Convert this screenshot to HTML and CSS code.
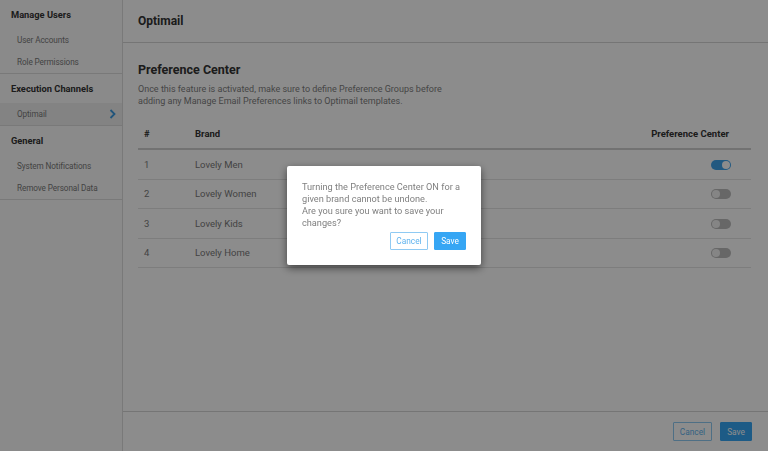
FILE: index.html
```html
<!DOCTYPE html>
<html lang="en">
<head>
  <meta charset="UTF-8" />
  <meta name="viewport" content="width=device-width, initial-scale=1.0"/>
  <title>Optimail Settings</title>
  <link rel="stylesheet" href="styles.css">
</head>
<body>
  <div class="layout">
    <nav class="sidebar">
      <div class="nav-group">
        <div class="nav-title">Manage Users</div>
        <a class="nav-item">User Accounts</a>
        <a class="nav-item">Role Permissions</a>
      </div>
      <div class="nav-group">
        <div class="nav-title">Execution Channels</div>
        <a class="nav-item active">Optimail
          <svg class="chevron" width="7" height="10" viewBox="0 0 7 10"><path d="M1.5 1 L5.5 5 L1.5 9" fill="none" stroke="#3d9be0" stroke-width="1.8"/></svg>
        </a>
      </div>
      <div class="nav-group">
        <div class="nav-title">General</div>
        <a class="nav-item">System Notifications</a>
        <a class="nav-item">Remove Personal Data</a>
      </div>
    </nav>

    <main class="main">
      <header class="page-header">Optimail</header>

      <section class="content">
        <h2>Preference Center</h2>
        <p class="desc">Once this feature is activated, make sure to define Preference Groups before adding any Manage Email Preferences links to Optimail templates.</p>

        <table class="brands">
          <colgroup>
            <col class="col-num">
            <col>
            <col class="col-pref">
          </colgroup>
          <thead>
            <tr><th class="num">#</th><th>Brand</th><th class="right">Preference Center</th></tr>
          </thead>
          <tbody>
            <tr><td class="num">1</td><td>Lovely Men</td><td class="right"><span class="toggle on"></span></td></tr>
            <tr><td class="num">2</td><td>Lovely Women</td><td class="right"><span class="toggle"></span></td></tr>
            <tr><td class="num">3</td><td>Lovely Kids</td><td class="right"><span class="toggle"></span></td></tr>
            <tr><td class="num">4</td><td>Lovely Home</td><td class="right"><span class="toggle"></span></td></tr>
          </tbody>
        </table>
      </section>

      <footer class="page-footer">
        <button class="btn btn-outline">Cancel</button>
        <button class="btn btn-primary">Save</button>
      </footer>
    </main>
  </div>

  <div class="overlay">
    <div class="modal">
      <p>Turning the Preference Center ON for a given brand cannot be undone.<br>Are you sure you want to save your changes?</p>
      <div class="modal-actions">
        <button class="btn btn-outline">Cancel</button>
        <button class="btn btn-primary">Save</button>
      </div>
    </div>
  </div>
</body>
</html>
```

FILE: styles.css
```css
body {
  font-family: Roboto, "Liberation Sans", sans-serif;
  margin: 0;
  background: #fff;
  color: #333;
}
.layout {
  display: flex;
  height: 451px;
}
.sidebar {
  width: 122px;
  flex-shrink: 0;
  background: #fbfbfb;
  border-right: 1px solid #dcdcdc;
}
.nav-group {
  border-bottom: 1px solid #dcdcdc;
}
.nav-title {
  height: 29px;
  line-height: 29px;
  padding-left: 11px;
  font-size: 9.3px;
  font-weight: bold;
  color: #333;
}
.nav-item {
  display: flex;
  align-items: center;
  justify-content: space-between;
  height: 22px;
  padding: 0 6px 0 17px;
  font-size: 8.2px;
  letter-spacing: -0.1px;
  color: #7a7a7a;
}
.nav-item.active {
  background: #efefef;
}
.main {
  flex: 1;
  display: flex;
  flex-direction: column;
  background: #fff;
}
.page-header {
  height: 42px;
  line-height: 42px;
  padding-left: 15px;
  border-bottom: 1px solid #d6d6d6;
  font-size: 12px;
  font-weight: bold;
}
.content {
  flex: 1;
  padding: 19px 17px 0 15px;
}
.content h2 {
  margin: 0;
  font-size: 12.5px;
  line-height: 16px;
}
.desc {
  margin: 6px 0 0;
  width: 310px;
  font-size: 9px;
  line-height: 11.5px;
  color: #808080;
}
.brands {
  width: 100%;
  table-layout: fixed;
  margin-top: 12px;
  border-collapse: collapse;
  font-size: 9.5px;
}
.col-num {
  width: 57px;
}
.col-pref {
  width: 200px;
}
.brands th {
  height: 29px;
  padding: 0;
  text-align: left;
  font-weight: bold;
  border-bottom: 2px solid #d0d0d0;
  color: #333;
}
.brands td {
  height: 28.5px;
  padding: 0;
  border-bottom: 1px solid #e3e3e3;
  color: #7a7a7a;
}
.brands .num {
  padding-left: 6px;
}
.brands th.right {
  text-align: right;
  padding-right: 22px;
}
.brands td.right {
  text-align: right;
  padding-right: 20px;
}
.toggle {
  display: inline-block;
  position: relative;
  width: 20px;
  height: 10px;
  border-radius: 5px;
  background: #bcbcbc;
  vertical-align: middle;
}
.toggle::after {
  content: "";
  position: absolute;
  top: 1px;
  left: 1px;
  width: 8px;
  height: 8px;
  border-radius: 50%;
  background: #f2f2f2;
}
.toggle.on {
  background: #3ea2ea;
}
.toggle.on::after {
  left: 11px;
  background: #fff;
}
.page-footer {
  height: 39px;
  border-top: 1px solid #d6d6d6;
  display: flex;
  align-items: center;
  justify-content: flex-end;
  gap: 8px;
  padding-right: 16px;
}
.btn {
  font-family: Roboto, "Liberation Sans", sans-serif;
  font-size: 8.3px;
  height: 19px;
  padding: 0 5px;
  border-radius: 1px;
  cursor: pointer;
}
.btn-outline {
  width: 39px;
  background: #fff;
  border: 1px solid #8fcaf3;
  color: #5fb3ee;
}
.btn-primary {
  width: 32px;
  background: #36a6f4;
  border: 1px solid #36a6f4;
  color: #fff;
}
.overlay {
  position: fixed;
  inset: 0;
  background: rgba(0, 0, 0, 0.45);
}
.modal {
  position: absolute;
  left: 287px;
  top: 166px;
  width: 164px;
  padding: 15px;
  background: #fff;
  border-radius: 2px;
  box-shadow: 0 3px 8px rgba(0, 0, 0, 0.55);
}
.modal p {
  margin: 0;
  font-size: 9.2px;
  line-height: 12px;
  color: #808080;
}
.modal-actions {
  display: flex;
  justify-content: flex-end;
  gap: 6px;
  margin-top: 3px;
}
.modal .btn {
  height: 18px;
}
.modal .btn-outline {
  width: 38px;
}
```
